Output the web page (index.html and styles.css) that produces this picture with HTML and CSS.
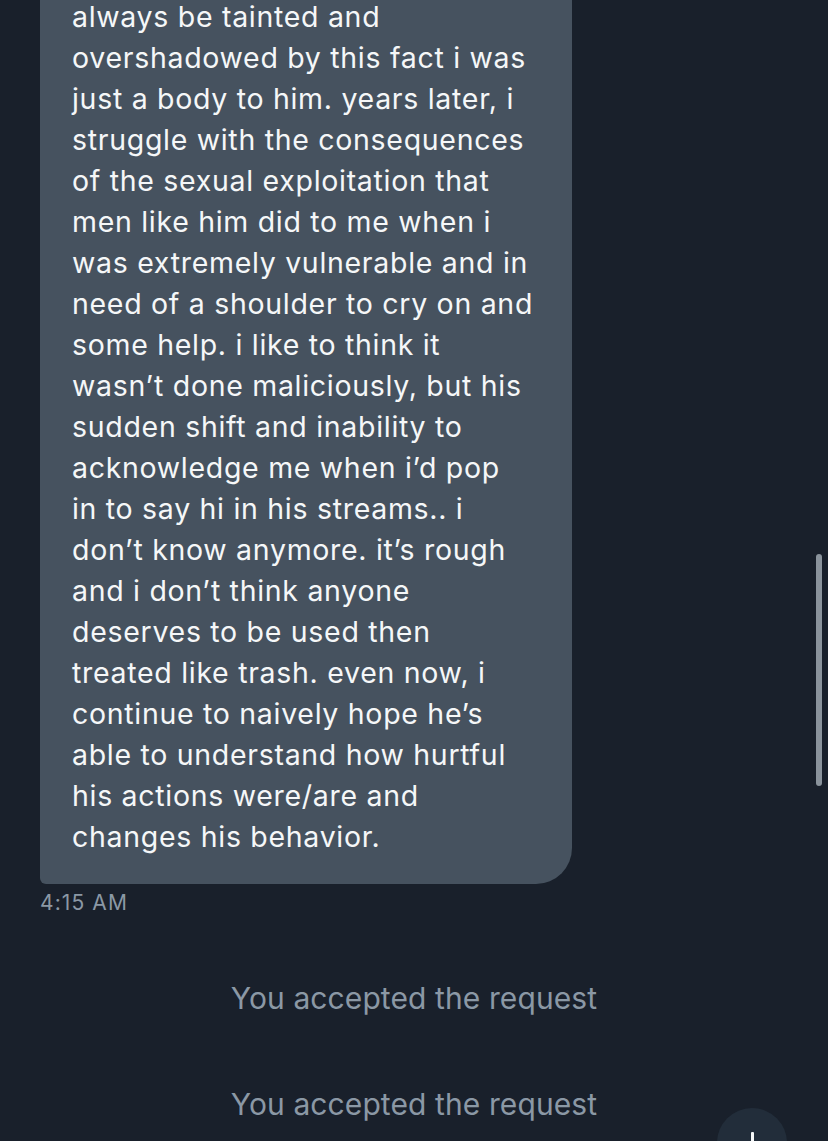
FILE: index.html
```html
<!DOCTYPE html>
<html>
<head>
<meta charset="utf-8">
<link rel="stylesheet" href="styles.css">
</head>
<body>
<div class="screen">
  <div class="conversation">
    <div class="bubble">
      <span class="line">always be tainted and</span>
      <span class="line">overshadowed by this fact i was</span>
      <span class="line">just a body to him. years later, i</span>
      <span class="line">struggle with the consequences</span>
      <span class="line">of the sexual exploitation that</span>
      <span class="line">men like him did to me when i</span>
      <span class="line">was extremely vulnerable and in</span>
      <span class="line">need of a shoulder to cry on and</span>
      <span class="line">some help. i like to think it</span>
      <span class="line">wasn’t done maliciously, but his</span>
      <span class="line">sudden shift and inability to</span>
      <span class="line">acknowledge me when i’d pop</span>
      <span class="line">in to say hi in his streams.. i</span>
      <span class="line">don’t know anymore. it’s rough</span>
      <span class="line">and i don’t think anyone</span>
      <span class="line">deserves to be used then</span>
      <span class="line">treated like trash. even now, i</span>
      <span class="line">continue to naively hope he’s</span>
      <span class="line">able to understand how hurtful</span>
      <span class="line">his actions were/are and</span>
      <span class="line">changes his behavior.</span>
    </div>
    <div class="time">4:15 AM</div>
    <div class="system">You accepted the request</div>
    <div class="system">You accepted the request</div>
  </div>
  <div class="scrollbar"></div>
  <div class="fab"><span class="fab-bar"></span></div>
</div>
</body>
</html>
```

FILE: styles.css
```css
html, body {
  margin: 0;
  padding: 0;
  background: #19202b;
}
.screen {
  position: relative;
  width: 828px;
  height: 1141px;
  overflow: hidden;
  background: #19202b;
  font-family: "Inter", "Noto Sans", "Liberation Sans", sans-serif;
}
.conversation {
  display: flex;
  flex-direction: column;
  padding: 0 40px;
}
.bubble {
  width: 532px;
  box-sizing: border-box;
  margin-top: -4px;
  padding: 0 32px 27px 32px;
  background: #46525f;
  border-radius: 0 0 36px 6px;
  color: #f5f7f8;
  font-size: 28.5px;
  line-height: 41px;
  letter-spacing: 0.7px;
}
.line {
  display: block;
  white-space: nowrap;
}
.time {
  margin-top: 7px;
  font-size: 21px;
  line-height: 24px;
  color: #8b98a5;
  letter-spacing: 1.1px;
}
.system {
  text-align: center;
  font-size: 30px;
  line-height: 36px;
  color: #8b98a5;
  letter-spacing: 0.1px;
}
.time + .system {
  margin-top: 65px;
}
.system + .system {
  margin-top: 70px;
}
.scrollbar {
  position: absolute;
  left: 816px;
  top: 554px;
  width: 6px;
  height: 232px;
  border-radius: 3px;
  background: #8a939c;
}
.fab {
  position: absolute;
  left: 717px;
  top: 1108px;
  width: 70px;
  height: 70px;
  border-radius: 50%;
  background: #222d3a;
}
.fab-bar {
  position: absolute;
  left: 34px;
  top: 24px;
  width: 3px;
  height: 22px;
  background: #f5f7f8;
  border-radius: 1px;
}
```
